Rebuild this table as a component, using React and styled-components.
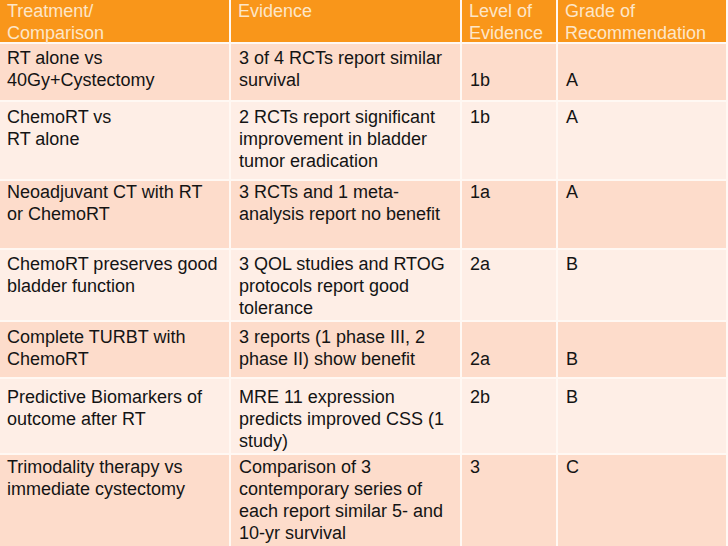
import React from "react";
import styled, { createGlobalStyle } from "styled-components";

const GlobalStyle = createGlobalStyle`
  html, body {
    margin: 0;
    padding: 0;
    background: #ffffff;
    overflow: hidden;
  }
  body {
    font-family: "Liberation Sans", Arial, sans-serif;
  }
`;

const Table = styled.div`
  display: grid;
  grid-template-columns: 229px 229px 94px 168px;
  column-gap: 2px;
  row-gap: 2px;
  width: 726px;
  height: 546px;
  padding-right: 2px;
  background: #fff8f3;
  overflow: hidden;
`;

const Row = styled.div`
  display: contents;
`;

const HeadCell = styled.div`
  background: #f9961a;
  color: #fde6c8;
  font-size: 18px;
  line-height: 22px;
  padding: 0 7px;
  height: 42px;
  box-sizing: border-box;
`;

const Cell = styled.div`
  background: ${(p) => (p.$shade ? "#fddccb" : "#feeee6")};
  color: #141414;
  font-size: 18px;
  line-height: 22px;
  padding: ${(p) => p.$pt}px 7px 0 ${(p) => (p.$first ? "7px" : "8px")};
  height: ${(p) => p.$h}px;
  box-sizing: border-box;
  overflow: hidden;
`;

const headers = [
  ["Treatment/", "Comparison"],
  ["Evidence"],
  ["Level of", "Evidence"],
  ["Grade of", "Recommendation"],
];

const rows = [
  {
    h: 56,
    pt: 3,
    cells: [
      ["RT alone vs", "40Gy+Cystectomy"],
      ["3 of 4 RCTs report similar", "survival"],
      ["", "1b"],
      ["", "A"],
    ],
  },
  {
    h: 77,
    pt: 4,
    cells: [
      ["ChemoRT vs", "RT alone"],
      ["2 RCTs report significant", "improvement in bladder", "tumor eradication"],
      ["1b"],
      ["A"],
    ],
  },
  {
    h: 67,
    pt: 0,
    cells: [
      ["Neoadjuvant CT with RT", "or ChemoRT"],
      ["3 RCTs and 1 meta-", "analysis report no benefit"],
      ["1a"],
      ["A"],
    ],
  },
  {
    h: 70,
    pt: 3,
    cells: [
      ["ChemoRT preserves good", "bladder function"],
      ["3 QOL studies and RTOG", "protocols report good", "tolerance"],
      ["2a"],
      ["B"],
    ],
  },
  {
    h: 55,
    pt: 4,
    cells: [
      ["Complete TURBT with", "ChemoRT"],
      ["3 reports (1 phase III, 2", "phase II) show benefit"],
      ["", "2a"],
      ["", "B"],
    ],
  },
  {
    h: 74,
    pt: 7,
    cells: [
      ["Predictive Biomarkers of", "outcome after RT"],
      ["MRE 11 expression", "predicts improved CSS (1", "study)"],
      ["2b"],
      ["B"],
    ],
  },
  {
    h: 91,
    pt: 1,
    cells: [
      ["Trimodality therapy vs", "immediate cystectomy"],
      ["Comparison of 3", "contemporary series of", "each report similar 5- and", "10-yr survival"],
      ["3"],
      ["C"],
    ],
  },
];

function Lines({ lines }) {
  return lines.map((l, i) => (
    <React.Fragment key={i}>
      {i > 0 && <br />}
      {l || "\u00a0"}
    </React.Fragment>
  ));
}

export default function App() {
  return (
    <>
      <GlobalStyle />
      <Table>
        <Row>
          {headers.map((h, i) => (
            <HeadCell key={i}>
              <Lines lines={h} />
            </HeadCell>
          ))}
        </Row>
        {rows.map((r, ri) => (
          <Row key={ri}>
            {r.cells.map((c, ci) => (
              <Cell key={ci} $h={r.h} $pt={r.pt} $shade={ri % 2 === 0} $first={ci === 0}>
                <Lines lines={c} />
              </Cell>
            ))}
          </Row>
        ))}
      </Table>
    </>
  );
}
